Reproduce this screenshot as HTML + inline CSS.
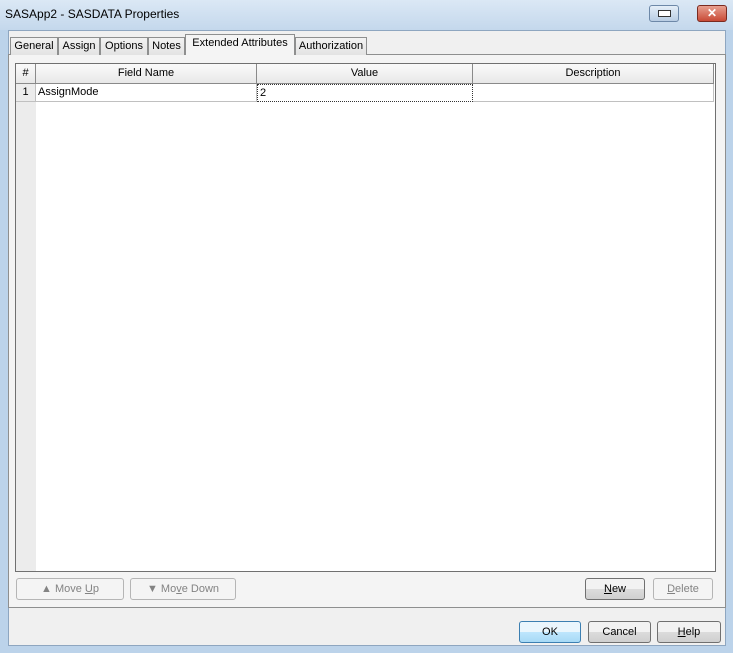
<!DOCTYPE html><html><head><style>
*{box-sizing:border-box;margin:0;padding:0}
body{width:733px;height:653px;overflow:hidden;font-family:"Liberation Sans",sans-serif;font-size:11px;color:#000;background:#bcd3ea;position:relative}
.a{position:absolute}
.client{left:8px;top:30px;width:718px;height:616px;background:#f0f0f0;border:1px solid #8ea6c0}
.tab{position:absolute;top:37px;height:18px;border:1px solid #8e8f8f;border-bottom:none;background:linear-gradient(#f2f2f2,#e3e3e3);text-align:center;line-height:16px;font-size:11px}
.btn{position:absolute;height:22px;border:1px solid #707070;border-radius:3px;background:linear-gradient(#f2f2f2 50%,#dcdcdc 50%,#cfcfcf);text-align:center;line-height:20px;font-size:11px}
.dis{border-color:#b5b5b5;background:#f4f4f4;color:#838383}
.th{position:absolute;top:0;height:20px;border-right:1px solid #8a8a8a;border-bottom:1px solid #8a8a8a;background:linear-gradient(#fafafa,#e8e8e8);text-align:center;line-height:19px}
.td{position:absolute;top:20px;height:18px;border-right:1px solid #c0c0c0;border-bottom:1px solid #c0c0c0;line-height:17px;padding-left:2px}
</style></head><body>
<div class="a" style="left:0;top:0;width:733px;height:30px;background:linear-gradient(#dbe8f5,#c4d8ec)"></div>
<div class="a" style="left:5px;top:7px;font-size:12px">SASApp2 - SASDATA Properties</div>
<div class="a" style="left:649px;top:5px;width:30px;height:17px;border:1px solid #6d88a8;border-radius:3px;background:linear-gradient(#e4eef8,#b9cde3)"><div class="a" style="left:8px;top:4px;width:13px;height:7px;border:1px solid #333;background:#fff"></div></div>
<div class="a" style="left:697px;top:5px;width:30px;height:17px;border:1px solid #7a2a20;border-radius:3px;background:linear-gradient(#e8a090,#c84a36);color:#fff;font-weight:bold;text-align:center;line-height:15px;font-size:12px">✕</div>
<div class="a client"></div>
<div class="a" style="left:8px;top:54px;width:718px;height:554px;border:1px solid #8e8f8f;background:#f4f4f4"></div>
<div class="tab" style="left:10px;width:48px">General</div>
<div class="tab" style="left:58px;width:42px">Assign</div>
<div class="tab" style="left:100px;width:48px">Options</div>
<div class="tab" style="left:148px;width:37px">Notes</div>
<div class="tab" style="left:185px;top:34px;height:21px;width:110px;background:#f4f4f4;line-height:17px">Extended Attributes</div>
<div class="tab" style="left:295px;width:72px">Authorization</div>
<div class="a" style="left:15px;top:63px;width:701px;height:509px;border:1px solid #707070;background:#fff">
<div class="a" style="left:0;top:0;width:20px;height:507px;background:#ececec"></div>
<div class="th" style="left:0;width:20px">#</div>
<div class="th" style="left:20px;width:221px">Field Name</div>
<div class="th" style="left:241px;width:216px">Value</div>
<div class="th" style="left:457px;width:241px">Description</div>
<div class="td" style="left:0;width:20px;background:#ececec;text-align:center;padding:0">1</div>
<div class="td" style="left:20px;width:221px;background:#fff">AssignMode</div>
<div class="td" style="left:241px;width:216px;background:#fff;border:1px dotted #333">2</div>
<div class="td" style="left:457px;width:241px;background:#fff"></div>
</div>
<div class="btn dis" style="left:16px;top:578px;width:108px">▲ Move <u>U</u>p</div>
<div class="btn dis" style="left:130px;top:578px;width:106px">▼ Mo<u>v</u>e Down</div>
<div class="btn" style="left:585px;top:578px;width:60px"><u>N</u>ew</div>
<div class="btn dis" style="left:653px;top:578px;width:60px"><u>D</u>elete</div>
<div class="btn" style="left:519px;top:621px;width:62px;border-color:#3c7fb1;background:linear-gradient(#eaf6fd 50%,#bee6fd 50%,#a7d9f5)">OK</div>
<div class="btn" style="left:588px;top:621px;width:63px">Cancel</div>
<div class="btn" style="left:657px;top:621px;width:64px"><u>H</u>elp</div>
</body></html>
